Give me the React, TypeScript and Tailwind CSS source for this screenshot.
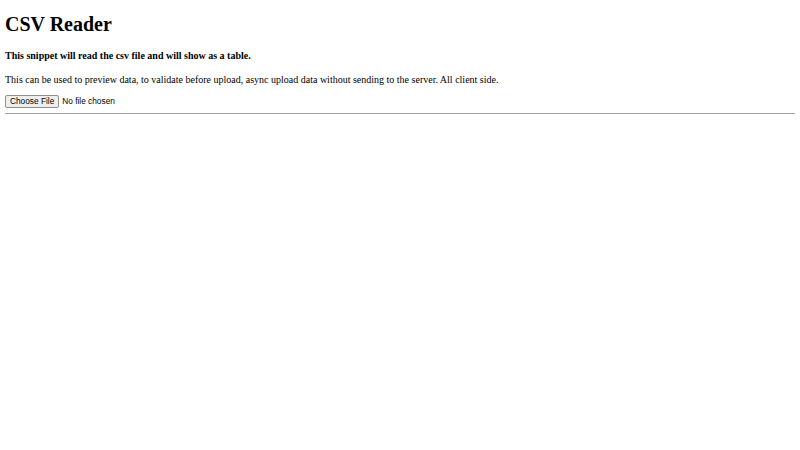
export default function App() {
  return (
    <div className="min-h-[450px] bg-white px-[5px] pt-[13px] text-black [font-family:'Liberation_Serif',serif]">
      <h1 className="text-[20px] leading-[23px] font-bold">CSV Reader</h1>
      <h4 className="mt-[14px] text-[10px] leading-[12px] font-bold">
        This snippet will read the csv file and will show as a table.
      </h4>
      <p className="mt-[12px] text-[10px] leading-[12px]">
        This can be used to preview data, to validate before upload, async upload data without sending to the server. All client side.
      </p>
      <div className="mt-[9px] flex items-center gap-[3px] [font-family:'Liberation_Sans',sans-serif] text-[8.3px]">
        <label className="flex h-[13px] items-center rounded-[2px] border border-[#8f8f8f] bg-[#efefef] px-[4px] leading-none">
          Choose File
          <input type="file" className="hidden" />
        </label>
        <span className="leading-none">No file chosen</span>
      </div>
      <hr className="mt-[5px] border-t border-[#a0a0a0]" />
    </div>
  );
}
